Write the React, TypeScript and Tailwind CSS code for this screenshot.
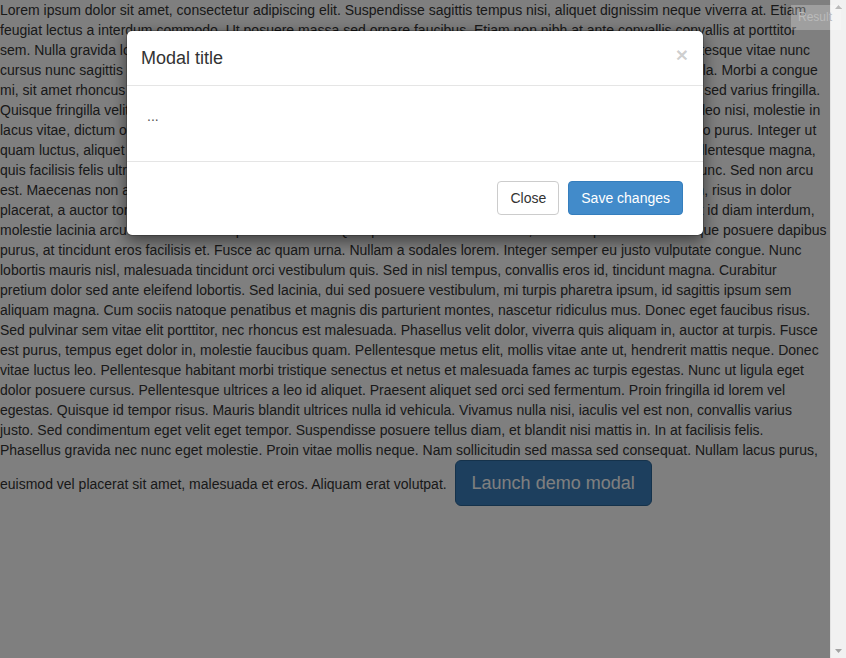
import React from "react";

const lines = [
  "Lorem ipsum dolor sit amet, consectetur adipiscing elit. Suspendisse sagittis tempus nisi, aliquet dignissim neque viverra at. Etiam",
  "feugiat lectus a interdum commodo. Ut posuere massa sed ornare faucibus. Etiam non nibh at ante convallis convallis at porttitor",
  "sem. Nulla gravida lorem vitae, ante ultricies, quis tristique orci placerat. Aenean tincidunt diam sed mauris pellentesque vitae nunc",
  "cursus nunc sagittis eu ligula tempor. Donec quis sapien eget lacus consequat ultricies vitae sed arcu. Nam at nulla. Morbi a congue",
  "mi, sit amet rhoncus nisi, at pharetra eros. Curabitur convallis tortor id molestie egestas. Nullam vel ipsum mauris sed varius fringilla.",
  "Quisque fringilla velit at viverra semper. Phasellus dapibus nibh a elementum rutrum. Aliquam tincidunt tellus nec leo nisi, molestie in",
  "lacus vitae, dictum odio ornare, sed cursus et porta. Vestibulum ante ipsum primis in faucibus orci luctus. Sed justo purus. Integer ut",
  "quam luctus, aliquet nulla ac, finibus odio. Morbi nec metus eget nunc posuere blandit vel et nisl. Suspendisse pellentesque magna,",
  "quis facilisis felis ultrices et vehicula. Fusce varius sapien in augue pretium, vel gravida erat tempor. Donec sed nunc. Sed non arcu",
  "est. Maecenas non ante mattis dignissim, ut hendrerit ex sodales. Integer eleifend lorem quis fermentum interdum, risus in dolor",
  "placerat, a auctor tortor nec, commodo sem. Nulla facilisi. Etiam pulvinar lectus ac ultricies rhoncus, nisi mauris et id diam interdum,",
  "molestie lacinia arcu in hac habitasse platea dictumst. Quisque euismod auctor lorem, vitae tempus enim nec neque posuere dapibus",
  "purus, at tincidunt eros facilisis et. Fusce ac quam urna. Nullam a sodales lorem. Integer semper eu justo vulputate congue. Nunc",
  "lobortis mauris nisl, malesuada tincidunt orci vestibulum quis. Sed in nisl tempus, convallis eros id, tincidunt magna. Curabitur",
  "pretium dolor sed ante eleifend lobortis. Sed lacinia, dui sed posuere vestibulum, mi turpis pharetra ipsum, id sagittis ipsum sem",
  "aliquam magna. Cum sociis natoque penatibus et magnis dis parturient montes, nascetur ridiculus mus. Donec eget faucibus risus.",
  "Sed pulvinar sem vitae elit porttitor, nec rhoncus est malesuada. Phasellus velit dolor, viverra quis aliquam in, auctor at turpis. Fusce",
  "est purus, tempus eget dolor in, molestie faucibus quam. Pellentesque metus elit, mollis vitae ante ut, hendrerit mattis neque. Donec",
  "vitae luctus leo. Pellentesque habitant morbi tristique senectus et netus et malesuada fames ac turpis egestas. Nunc ut ligula eget",
  "dolor posuere cursus. Pellentesque ultrices a leo id aliquet. Praesent aliquet sed orci sed fermentum. Proin fringilla id lorem vel",
  "egestas. Quisque id tempor risus. Mauris blandit ultrices nulla id vehicula. Vivamus nulla nisi, iaculis vel est non, convallis varius",
  "justo. Sed condimentum eget velit eget tempor. Suspendisse posuere tellus diam, et blandit nisi mattis in. In at facilisis felis.",
  "Phasellus gravida nec nunc eget molestie. Proin vitae mollis neque. Nam sollicitudin sed massa sed consequat. Nullam lacus purus,",
];

const lastLine = "euismod vel placerat sit amet, malesuada et eros. Aliquam erat volutpat.";

const ScrollArrow = ({ down }: { down?: boolean }) => (
  <svg width="7" height="4" viewBox="0 0 7 4" className="fill-[#a3a3a3]">
    <polygon points={down ? "0,0 7,0 3.5,4" : "3.5,0 7,4 0,4"} />
  </svg>
);

const Modal = () => (
  <div className="h-fit w-[578px] rounded-[6px] border border-black/20 bg-white bg-clip-padding shadow-[0_5px_15px_rgba(0,0,0,0.5)]">
    <div className="flex items-start justify-between border-b border-[#e5e5e5] p-[15px]">
      <h4 className="-ml-px text-[18px] leading-6 font-normal text-[#333]">Modal title</h4>
      <button className="-mt-[2px] text-[21px] leading-none font-bold text-black/20">×</button>
    </div>
    <div className="px-5 pt-5 pb-[35px]">
      <p className="text-[#555]">...</p>
    </div>
    <div className="flex justify-end gap-[9px] border-t border-[#e5e5e5] px-5 pt-[19px] pb-5">
      <button className="rounded-[4px] border border-[#ccc] bg-white px-3 py-[6px] text-[14px] leading-5 text-[#333]">
        Close
      </button>
      <button className="rounded-[4px] border border-[#357ebd] bg-[#428bca] px-3 py-[6px] text-[14px] leading-5 text-white">
        Save changes
      </button>
    </div>
  </div>
);

export default function App() {
  return (
    <div className="relative flex h-[658px] w-[846px] overflow-hidden bg-white font-['Liberation_Sans',Arial,sans-serif] text-[14px] leading-5 text-[#333]">
      <div className="relative isolate h-[658px] w-[830px] shrink-0 overflow-hidden bg-white">
        <p className="whitespace-nowrap">
          {lines.map((line, i) => (
            <React.Fragment key={i}>
              {line}
              <br />
            </React.Fragment>
          ))}
          {lastLine}{" "}
          <button className="ml-1 inline-block rounded-[6px] border border-[#2a6496] bg-[#3a7fbd] px-4 py-[10px] text-[18px] leading-6 text-white">
            Launch demo modal
          </button>
        </p>

        <div className="absolute top-0 left-0 z-10 h-[658px] w-[830px] bg-[rgba(0,0,0,0.5)]" />
        <div className="absolute inset-0 z-20 flex justify-center pt-[30px]">
          <Modal />
        </div>
      </div>

      <div className="flex h-full w-4 flex-col items-center justify-between border-l border-[#e3e3e3] bg-[#f1f1f1] py-[5px]">
        <ScrollArrow />
        <ScrollArrow down />
      </div>

      <div className="absolute top-[5px] left-[791px] z-30 h-[25px] w-[50px] bg-white/25 pl-[7px] text-[12px] leading-[25px] text-[#bbb]">
        Result
      </div>
    </div>
  );
}
